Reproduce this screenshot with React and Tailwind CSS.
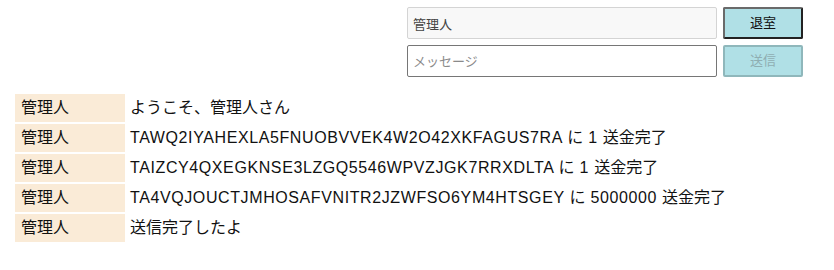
const messages = [
  { id: 1, user: "管理人", text: "ようこそ、管理人さん" },
  { id: 2, user: "管理人", text: "TAWQ2IYAHEXLA5FNUOBVVEK4W2O42XKFAGUS7RA に 1 送金完了" },
  { id: 3, user: "管理人", text: "TAIZCY4QXEGKNSE3LZGQ5546WPVZJGK7RRXDLTA に 1 送金完了" },
  { id: 4, user: "管理人", text: "TA4VQJOUCTJMHOSAFVNITR2JZWFSO6YM4HTSGEY に 5000000 送金完了" },
  { id: 5, user: "管理人", text: "送信完了したよ" },
];

// 英数字だけ少し字間を広げる
function MessageText({ text }) {
  const parts = text.split(/([\x20-\x7E]+)/).filter(Boolean);
  return (
    <span>
      {parts.map((p, i) =>
        /^[\x20-\x7E]+$/.test(p) ? (
          <span key={i} className="tracking-[0.6px]">{p}</span>
        ) : (
          <span key={i}>{p}</span>
        )
      )}
    </span>
  );
}

export default function App() {
  return (
    <div
      className="w-[834px] h-[270px] bg-white text-[16px] text-[#111]"
      style={{ fontFamily: '"Liberation Sans", "Noto Sans CJK JP", sans-serif' }}
    >
      {/* フォーム */}
      <div className="flex justify-end pt-[7px] pr-[31px]">
        <div className="grid grid-cols-[310px_80px] gap-x-[6px] gap-y-[6px]">
          <input
            readOnly
            value="管理人"
            className="h-[32px] rounded-[2px] border border-[#d4d4d4] bg-[#f8f8f8] px-[5px] text-[13px] text-[#444] outline-none"
          />
          <button className="h-[32px] rounded-[2px] border-2 border-t-[#6a6a6a] border-l-[#6a6a6a] border-r-[#222] border-b-[#222] bg-[#b0e0e6] text-[13px] text-[#111]">
            退室
          </button>
          <input
            placeholder="メッセージ"
            className="h-[32px] rounded-[2px] border border-[#767676] bg-white px-[5px] text-[13px] outline-none placeholder:text-[#8a8a8a]"
          />
          <button
            disabled
            className="h-[32px] rounded-[2px] border-2 border-[#8fb7bb] bg-[#b0e0e6] text-[13px] text-[#8faeb2]"
          >
            送信
          </button>
        </div>
      </div>

      {/* メッセージ一覧 */}
      <div className="mt-[17px] ml-[15px] grid grid-cols-[110px_auto] gap-y-[2px] gap-x-[2px] w-max">
        {messages.map((m) => (
          <div key={m.id} className="contents">
            <div className="flex h-[28px] items-center bg-[#faebd7] pl-[6px]">{m.user}</div>
            <div className="flex h-[28px] items-center pl-[3px]">
              <MessageText text={m.text} />
            </div>
          </div>
        ))}
      </div>
    </div>
  );
}
